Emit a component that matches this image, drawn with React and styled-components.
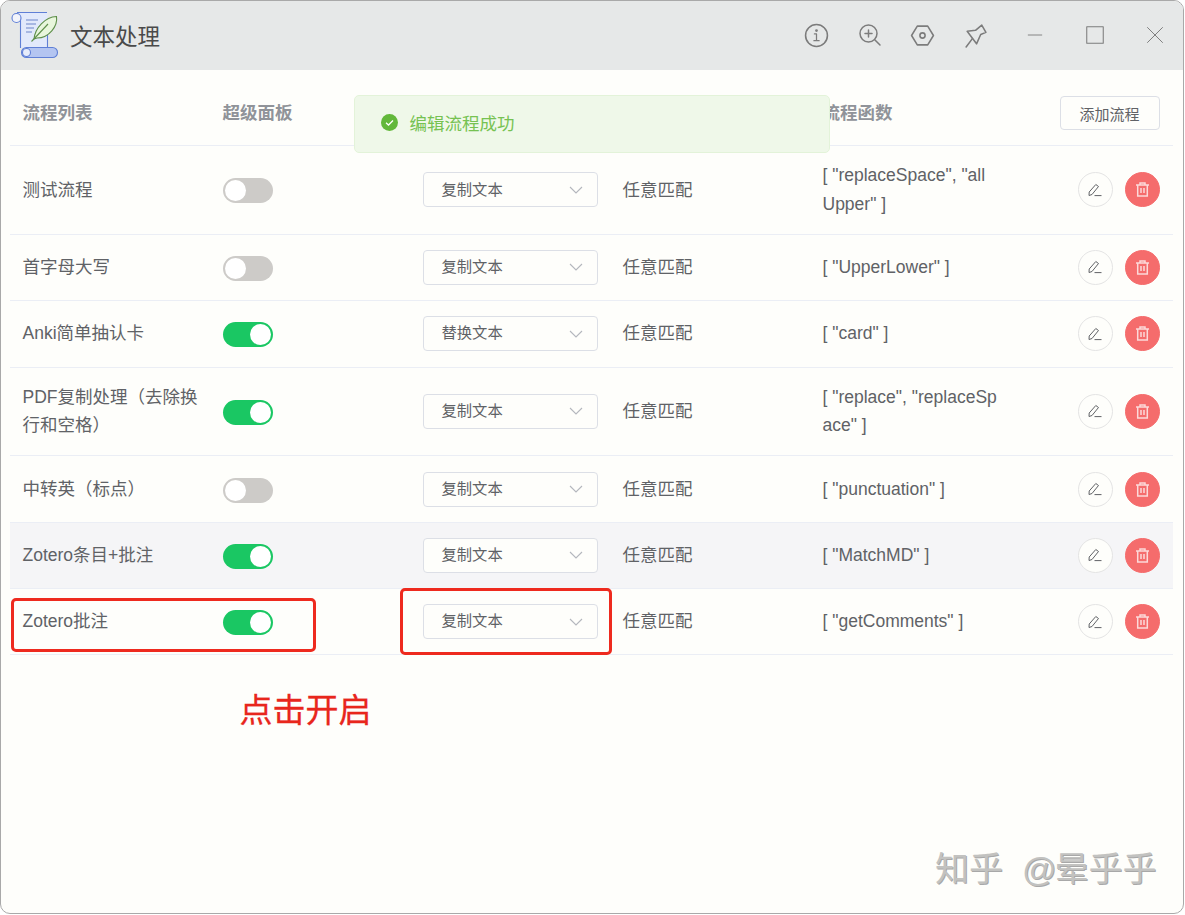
import React from 'react';
import styled, { createGlobalStyle } from 'styled-components';

const FONT = '"Liberation Sans", "Noto Sans CJK SC", sans-serif';

const Global = createGlobalStyle`
  html, body { margin: 0; padding: 0; background: #ffffff; }
  * { box-sizing: border-box; }
  body { font-family: ${FONT}; }
`;

const Page = styled.div`
  width: 1185px;
  height: 915px;
  overflow: hidden;
`;
const Win = styled.div`
  position: relative;
  width: 1184px;
  height: 914px;
  border: 1.5px solid #a9a9a9;
  border-radius: 10px;
  background: #fefefb;
  overflow: hidden;
`;
const TitleBar = styled.header`
  height: 68.5px;
  background: #e6e8e8;
  display: flex;
  align-items: center;
  padding-left: 10px;
`;
const Title = styled.h1`
  margin: 0 0 0 11px;
  font-size: 22.5px;
  font-weight: 400;
  color: #4a4a4a;
  flex: 1;
`;
const ToolIcons = styled.div`
  display: flex;
  align-items: center;
  gap: 5px;
  margin-right: 7.5px;
`;
const WinIcons = styled.div`
  display: flex;
  align-items: center;
  gap: 4px;
`;
const ToolSlot = styled.span`
  width: 48px;
  height: 40px;
  display: flex;
  align-items: center;
  justify-content: center;
  color: #7c7c7c;
`;
const WinSlot = styled(ToolSlot)`
  width: 56px;
`;
const Table = styled.div`
  margin: 0 0 0 8.5px;
  width: 1163px;
`;
const Row = styled.div`
  display: grid;
  grid-template-columns: 200px 200px 200px 200px 200px 1fr;
  align-items: center;
  padding: 15.2px 0;
  border-bottom: 1px solid #ebeef5;
  background: ${p => (p.$hover ? '#f5f5f7' : 'transparent')};
  color: #606266;
  font-size: 17.5px;
  line-height: 28.7px;
`;
const HeadRow = styled(Row)`
  height: 76.5px;
  padding: 16px 0 4px;
  color: #909399;
  font-weight: 700;
`;
const Cell = styled.div`
  padding: 0 11px 0 13px;
  word-break: break-all;
  min-height: 0;
`;
const Actions = styled.div`
  display: flex;
  justify-content: flex-end;
  gap: 12px;
  padding-right: 13px;
`;
const AddButton = styled.button`
  width: 100px;
  height: 34px;
  padding: 0;
  border: 1px solid #dcdfe6;
  border-radius: 4px;
  background: #fefefb;
  color: #606266;
  font: 400 15px ${FONT};
`;
const Track = styled.span`
  display: block;
  position: relative;
  width: 50px;
  height: 25px;
  border-radius: 13px;
  background: ${p => (p.$on ? '#1ac763' : '#cdcbc8')};
  margin-top: 2px;
`;
const Knob = styled.span`
  position: absolute;
  top: 2px;
  left: ${p => (p.$on ? '27px' : '2px')};
  width: 21px;
  height: 21px;
  border-radius: 50%;
  background: #fff;
`;
const Select = styled.div`
  width: 175px;
  height: 35px;
  border: 1px solid #dcdfe6;
  border-radius: 4px;
  background: #fefefb;
  display: flex;
  align-items: center;
  justify-content: space-between;
  padding: 0 14px 0 18px;
  font-size: 15.3px;
  color: #606266;
`;
const RoundButton = styled.button`
  width: 35px;
  height: 35px;
  padding: 0;
  border-radius: 50%;
  display: flex;
  align-items: center;
  justify-content: center;
  border: 1px solid ${p => (p.$danger ? '#f56c6c' : '#e4e4e4')};
  background: ${p => (p.$danger ? '#f56c6c' : '#fefefb')};
  color: ${p => (p.$danger ? '#fcd9d9' : '#606266')};
`;
const Toast = styled.div`
  position: absolute;
  left: 352.5px;
  top: 93.5px;
  width: 476px;
  height: 58px;
  display: flex;
  align-items: center;
  gap: 12px;
  padding: 0 0 3px 26px;
  background: #eff8e9;
  border: 1px solid #e3f3d9;
  border-radius: 5px;
  color: #76c252;
  font-size: 17.5px;
`;
const Mark = styled.div`
  position: absolute;
  left: ${p => p.$x}px;
  top: ${p => p.$y}px;
  width: ${p => p.$w}px;
  height: ${p => p.$h}px;
  border: 3.5px solid #ee2a1e;
  border-radius: 5px;
`;
const Note = styled.div`
  position: absolute;
  left: 238.5px;
  top: 687px;
  font-size: 33px;
  line-height: 46px;
  color: #e8261c;
  -webkit-text-stroke: 0.3px #e8261c;
`;
const Watermark = styled.div`
  position: absolute;
  left: 934px;
  top: 844px;
  font-size: 34px;
  line-height: 48px;
  font-weight: 400;
  white-space: nowrap;
  color: #c2c2c0;
  text-shadow: 1px 1px 0 #a8a8a8;
`;
const Handle = styled.span`
  margin: 0 -2px 0 19px;
`;

const Logo = () => (
  <svg width="48" height="50" viewBox="0 0 48 50" fill="none">
    <rect x="9" y="3" width="27.5" height="35" fill="#e2e9fb" />
    <path d="M6 2.5h30M9.5 7v31" stroke="#5f7fd6" strokeWidth="1.1" />
    <circle cx="5.5" cy="8" r="4.5" fill="#f2f4fb" stroke="#5f7fd6" strokeWidth="1.1" />
    <path d="M15 10h12M15 14h10M15 18h8M15 22h6" stroke="#6d86c9" strokeWidth="1.1" />
    <path d="M36.5 22v16" stroke="#5f7fd6" strokeWidth="1.1" />
    <rect x="10.5" y="37.5" width="36" height="10" rx="5" fill="#b4c5f1" stroke="#5f7fd6" strokeWidth="1.1" />
    <circle cx="15.5" cy="42.5" r="4" fill="#e6ecfb" stroke="#5f7fd6" strokeWidth="1.1" />
    <path d="M23 29C24 18 34 7 45.5 6.5C47 16 38 28 26 28Z" fill="#e8f6dc" stroke="#5e8f4a" strokeWidth="1.1" />
    <path d="M20.5 31.5L37 14" stroke="#5e8f4a" strokeWidth="1.1" />
  </svg>
);

const Svg = ({ children, size = 24 }) => (
  <svg width={size} height={size} viewBox="0 0 24 24" fill="none" stroke="currentColor" strokeWidth="1.5" strokeLinecap="round" strokeLinejoin="round">
    {children}
  </svg>
);

const Edit = () => (
  <svg width="16" height="16" viewBox="0 0 16 16" fill="none" stroke="currentColor" strokeWidth="1" strokeLinejoin="round">
    <path d="M2.2 10L8.8 2.5L11.5 4.5L5 12.5L2 13.5Z" />
    <path d="M7.5 13.6H14.5" />
  </svg>
);
const Trash = () => (
  <svg width="15" height="15" viewBox="0 0 15 15" fill="none" stroke="currentColor" strokeWidth="1.5">
    <path d="M1 3H14M5 3V1H10V3M2.7 3V14H12.3V3M6 6V11M9 6V11" />
  </svg>
);
const Chevron = () => (
  <svg width="14" height="8" viewBox="0 0 14 8" fill="none" stroke="#b4b7bd" strokeWidth="1.1">
    <path d="M1 1L7 7L13 1" />
  </svg>
);

const rows = [
  { name: '测试流程', on: false, mode: '复制文本', fn: '[ "replaceSpace", "all Upper" ]' },
  { name: '首字母大写', on: false, mode: '复制文本', fn: '[ "UpperLower" ]' },
  { name: 'Anki简单抽认卡', on: true, mode: '替换文本', fn: '[ "card" ]' },
  { name: 'PDF复制处理（去除换行和空格）', on: true, mode: '复制文本', fn: '[ "replace", "replaceSpace" ]' },
  { name: '中转英（标点）', on: false, mode: '复制文本', fn: '[ "punctuation" ]' },
  { name: 'Zotero条目+批注', on: true, mode: '复制文本', fn: '[ "MatchMD" ]', hover: true },
  { name: 'Zotero批注', on: true, mode: '复制文本', fn: '[ "getComments" ]' },
];

export default function App() {
  return (
    <Page>
      <Global />
      <Win>
        <TitleBar>
          <Logo />
          <Title>文本处理</Title>
          <ToolIcons>
            <ToolSlot>
              <Svg size={25}>
                <circle cx="12" cy="12" r="10.5" />
                <path d="M10 10.5h2v6.5M9.5 17h5" strokeWidth="1.2" />
                <circle cx="12" cy="7.3" r=".6" />
              </Svg>
            </ToolSlot>
            <ToolSlot>
              <Svg size={24}>
                <circle cx="10.5" cy="10.5" r="8.5" />
                <path d="M7 10.5h7M10.5 7v7M17 17l5 5" />
              </Svg>
            </ToolSlot>
            <ToolSlot>
              <Svg size={25}>
                <path d="M7 3h10l5.5 9L17 21H7L1.5 12Z" />
                <circle cx="12" cy="12" r="2.5" />
              </Svg>
            </ToolSlot>
            <ToolSlot>
              <Svg size={25}>
                <path d="M18 2L22 9L17 11L13 20L4 8L12 7Z" />
                <path d="M9 15L3 23" />
              </Svg>
            </ToolSlot>
          </ToolIcons>
          <WinIcons>
            <WinSlot>
              <Svg size={18}>
                <path d="M3 12H21" strokeWidth="1.2" />
              </Svg>
            </WinSlot>
            <WinSlot>
              <Svg size={18}>
                <rect x="1" y="1" width="22" height="22" strokeWidth="1.4" />
              </Svg>
            </WinSlot>
            <WinSlot>
              <Svg size={18}>
                <path d="M2 2L22 22M22 2L2 22" strokeWidth="1.3" />
              </Svg>
            </WinSlot>
          </WinIcons>
        </TitleBar>
        <Table>
          <HeadRow>
            <Cell>流程列表</Cell>
            <Cell>超级面板</Cell>
            <Cell />
            <Cell />
            <Cell>流程函数</Cell>
            <Actions><AddButton>添加流程</AddButton></Actions>
          </HeadRow>
          {rows.map(r => (
            <Row key={r.name} $hover={r.hover}>
              <Cell>{r.name}</Cell>
              <Cell><Track $on={r.on}><Knob $on={r.on} /></Track></Cell>
              <Cell><Select>{r.mode}<Chevron /></Select></Cell>
              <Cell>任意匹配</Cell>
              <Cell>{r.fn}</Cell>
              <Actions>
                <RoundButton><Edit /></RoundButton>
                <RoundButton $danger><Trash /></RoundButton>
              </Actions>
            </Row>
          ))}
        </Table>
        <Toast>
          <svg width="17" height="17" viewBox="0 0 17 17">
            <circle cx="8.5" cy="8.5" r="8.5" fill="#62b83a" />
            <path d="M5 8.8L7.5 11L12 6.5" fill="none" stroke="#fff" strokeWidth="1.3" />
          </svg>
          编辑流程成功
        </Toast>
        <Mark $x={10} $y={597} $w={305} $h={54} />
        <Mark $x={399} $y={587} $w={212} $h={67} />
        <Note>点击开启</Note>
        <Watermark>知乎<Handle>@</Handle>晕乎乎</Watermark>
      </Win>
    </Page>
  );
}
